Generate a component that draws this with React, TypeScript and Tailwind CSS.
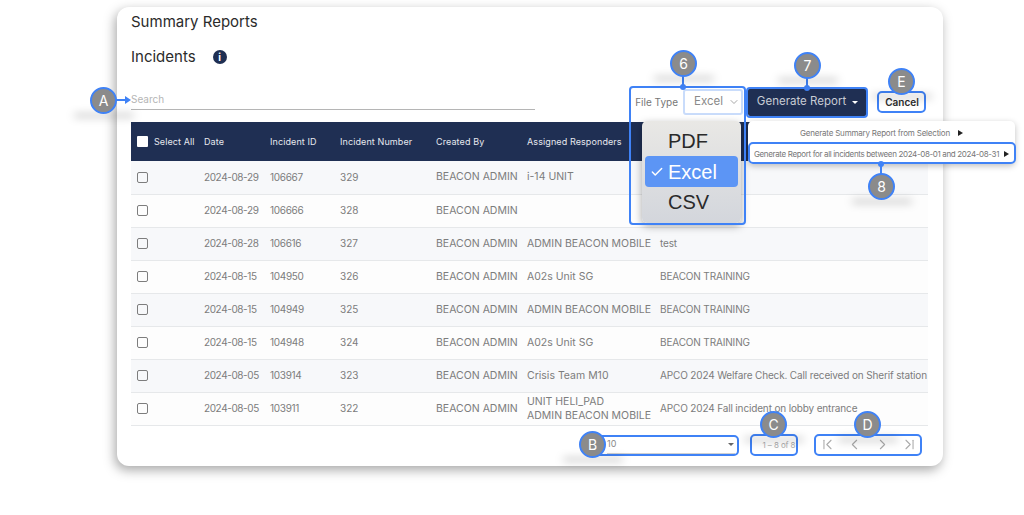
import React from 'react';
import { ChevronDown, ChevronLeft, ChevronRight, Check, ChevronFirst, ChevronLast } from 'lucide-react';

const rows = [
  { date: '2024-08-29', id: '106667', num: '329', by: 'BEACON ADMIN', who: ['i-14 UNIT'], desc: '' },
  { date: '2024-08-29', id: '106666', num: '328', by: 'BEACON ADMIN', who: [], desc: '' },
  { date: '2024-08-28', id: '106616', num: '327', by: 'BEACON ADMIN', who: ['ADMIN BEACON MOBILE'], desc: 'test' },
  { date: '2024-08-15', id: '104950', num: '326', by: 'BEACON ADMIN', who: ['A02s Unit SG'], desc: 'BEACON TRAINING' },
  { date: '2024-08-15', id: '104949', num: '325', by: 'BEACON ADMIN', who: ['ADMIN BEACON MOBILE'], desc: 'BEACON TRAINING' },
  { date: '2024-08-15', id: '104948', num: '324', by: 'BEACON ADMIN', who: ['A02s Unit SG'], desc: 'BEACON TRAINING' },
  { date: '2024-08-05', id: '103914', num: '323', by: 'BEACON ADMIN', who: ['Crisis Team M10'], desc: 'APCO 2024 Welfare Check. Call received on Sherif station' },
  { date: '2024-08-05', id: '103911', num: '322', by: 'BEACON ADMIN', who: ['UNIT HELI_PAD', 'ADMIN BEACON MOBILE'], desc: 'APCO 2024 Fall incident on lobby entrance' },
];

function Bubble({ label, className }: { label: string; className: string }) {
  return (
    <div className={'absolute z-30 ' + className}>
      <div className="absolute left-[-16px] top-[27px] h-[3px] w-[60px] rounded-full bg-black/30 blur-[4px]" />
      <div className="relative flex h-[27px] w-[27px] items-center justify-center rounded-full border-[2px] border-[#3f82f6] bg-[#8b8b8b] text-[14px] text-white">
        {label}
      </div>
    </div>
  );
}

export default function App() {
  return (
    <div className="relative h-[515px] w-[1024px] overflow-hidden bg-white font-['Inter',sans-serif]">
      {/* Card */}
      <div className="ml-[117px] mt-[7px] flex h-[459px] w-[826px] flex-col rounded-xl bg-white pl-[14px] pr-[15px] shadow-[-2px_4px_12px_rgba(0,0,0,0.35)]">
        <h1 className="mt-[6px] text-[15px] leading-[18px] text-[#2b2b2b]">Summary Reports</h1>
        <div className="mt-[17px] flex items-center gap-[17px]">
          <h2 className="text-[15px] leading-[18px] text-[#2b2b2b]">Incidents</h2>
          <div className="flex h-[14px] w-[14px] items-center justify-center rounded-full bg-[#1f2f53] text-[10px] font-bold leading-none text-white">i</div>
        </div>

        <div className="mt-[22px] flex items-start justify-between">
          <div className="flex h-[22px] w-[404px] items-end border-b border-[#b5b5b5] pb-[3px] text-[10px] leading-[14px] text-[#b5b5b5]">Search</div>
          <div className="mr-[3px] flex items-center">
            <span className="text-[10px] text-[#777777]">File Type</span>
            <div className="ml-[5px] flex h-[26px] w-[60px] items-center justify-between rounded-[3px] border-2 border-[#c9dcfb] bg-white pl-[9px] pr-[1px] text-[11.5px] text-[#8a8a8a]">
              Excel
              <ChevronDown size={12} strokeWidth={1.5} />
            </div>
            <button className="ml-[5px] flex h-[28px] w-[119px] items-center justify-center gap-[6px] rounded-[2px] bg-[#1f2f53] text-[11.5px] text-[#c8ccd4]">
              Generate Report
              <span className="h-0 w-0 border-x-[3px] border-t-[3px] border-x-transparent border-t-white" />
            </button>
            <button className="ml-[12px] w-[46px] text-center text-[10px] font-semibold text-[#2b2b2b]">Cancel</button>
          </div>
        </div>

        <table className="mt-[6px] w-[797px] table-fixed border-collapse text-[10.5px] text-[#7c7c7c]">
          <colgroup>
            <col className="w-[73px]" />
            <col className="w-[66px]" />
            <col className="w-[70px]" />
            <col className="w-[96px]" />
            <col className="w-[91px]" />
            <col className="w-[133px]" />
            <col />
          </colgroup>
          <thead>
            <tr className="h-[39px] bg-[#1f2f53] text-left text-[9px] font-normal tracking-[0.1px] text-[#e6e8ee]">
              <th className="pl-[6px] font-normal">
                <div className="flex items-center gap-[6px] whitespace-nowrap">
                  <span className="h-[11px] w-[11px] rounded-[1px] bg-white" />
                  Select All
                </div>
              </th>
              <th className="font-normal">Date</th>
              <th className="font-normal">Incident ID</th>
              <th className="font-normal">Incident Number</th>
              <th className="font-normal">Created By</th>
              <th className="font-normal">Assigned Responders</th>
              <th />
            </tr>
          </thead>
          <tbody>
            {rows.map((r, i) => (
              <tr key={r.id} className={'h-[33px] border-b border-[#e6e8ea] ' + (i % 2 === 0 ? 'bg-[#f7f8fa]' : 'bg-[#fdfdfd]')}>
                <td className="pl-[6px]">
                  <span className="block h-[11px] w-[11px] rounded-[2px] border-[1.5px] border-[#7d7d7d]" />
                </td>
                <td className="text-[10px] tracking-[-0.4px]">{r.date}</td>
                <td className="text-[10px] tracking-[-0.3px]">{r.id}</td>
                <td className="text-[10px]">{r.num}</td>
                <td className="whitespace-nowrap">{r.by}</td>
                <td className="whitespace-nowrap leading-[14px]">
                  {r.who.map((w) => (
                    <div key={w}>{w}</div>
                  ))}
                </td>
                <td className="whitespace-nowrap text-[10px] tracking-[-0.15px]">{r.desc}</td>
              </tr>
            ))}
          </tbody>
        </table>

        {/* Pagination */}
        <div className="mt-[10px] flex items-start text-[#aaaaaa]">
          <div className="ml-[476px] flex h-[18px] w-[128px] items-center justify-between border-b border-[#d0d0d0] text-[9px] text-[#8a8a8a]">
            10
            <span className="mr-[1px] h-0 w-0 border-x-[3.5px] border-t-[3.5px] border-x-transparent border-t-[#666666]" />
          </div>
          <div className="ml-[24px] w-[40px] pt-[3px] text-center text-[8px] tracking-[-0.1px]">1 – 8 of 8</div>
          <div className="ml-[20px] flex w-[99px] items-center justify-between">
            <ChevronFirst size={17} strokeWidth={1.5} />
            <ChevronLeft size={17} strokeWidth={1.5} />
            <ChevronRight size={17} strokeWidth={1.5} />
            <ChevronLast size={17} strokeWidth={1.5} />
          </div>
        </div>
      </div>

      {/* Native select list */}
      <div className="absolute left-[642px] top-[121px] z-10 flex h-[102px] w-[99px] flex-col rounded-[5px] bg-gradient-to-b from-[#e9e8e5] to-[#d3d6dc] px-[3px] pt-[5px] font-['Liberation_Sans',sans-serif] text-[20px] leading-[30px] text-[#2a2a2a] shadow-[0_3px_8px_rgba(0,0,0,0.35)]">
        <div className="pl-[23px]">PDF</div>
        <div className="flex h-[31px] items-center gap-[4px] rounded-[4px] bg-[#5c95f5] pl-[5px] text-white">
          <Check size={14} strokeWidth={2.5} />
          Excel
        </div>
        <div className="pl-[23px]">CSV</div>
      </div>

      {/* Generate menu */}
      <div className="absolute left-[748px] top-[121px] z-10 flex h-[43px] w-[267px] flex-col items-center rounded-[5px] bg-white pt-[2px] text-[#777777] shadow-[0_2px_6px_rgba(0,0,0,0.25)]">
        <div className="flex h-[20px] items-center gap-[8px] text-[8px] tracking-[-0.2px]">
          Generate Summary Report from Selection
          <span className="h-0 w-0 border-y-[3.5px] border-l-[5px] border-y-transparent border-l-[#222222]" />
        </div>
        <div className="flex h-[21px] items-center gap-[5px] whitespace-nowrap text-[8px] tracking-[-0.35px]">
          Generate Report for all incidents between 2024-08-01 and 2024-08-31
          <span className="h-0 w-0 border-y-[3.5px] border-l-[5px] border-y-transparent border-l-[#222222]" />
        </div>
      </div>

      {/* Callout outlines */}
      <div className="absolute left-[629px] top-[86px] z-20 h-[139px] w-[117px] rounded-[4px] border-2 border-[#3f82f6]" />
      <div className="absolute left-[746px] top-[87px] z-20 h-[31px] w-[122px] rounded-[4px] border-2 border-[#3f82f6]" />
      <div className="absolute left-[877px] top-[91px] z-20 h-[22px] w-[49px] rounded-[5px] border-2 border-[#3f82f6]" />
      <div className="absolute left-[748px] top-[142px] z-20 h-[22px] w-[268px] rounded-[5px] border-2 border-[#3f82f6]" />
      <div className="absolute left-[590px] top-[435px] z-20 h-[21px] w-[149px] rounded-[5px] border-2 border-[#3f82f6]" />
      <div className="absolute left-[750px] top-[434px] z-20 h-[22px] w-[48px] rounded-[5px] border-2 border-[#3f82f6]" />
      <div className="absolute left-[814px] top-[434px] z-20 h-[22px] w-[108px] rounded-[5px] border-2 border-[#3f82f6]" />

      {/* Connector dots */}
      <div className="absolute left-[680px] top-[84px] z-20 h-[6px] w-[6px] rounded-full bg-[#3f82f6]" />
      <div className="absolute left-[804px] top-[85px] z-20 h-[6px] w-[6px] rounded-full bg-[#3f82f6]" />
      <div className="absolute left-[878px] top-[161px] z-20 h-[6px] w-[6px] rounded-full bg-[#3f82f6]" />
      <div className="absolute left-[682px] top-[76px] z-20 h-[10px] w-[2px] bg-[#3f82f6]" />
      <div className="absolute left-[806px] top-[76px] z-20 h-[10px] w-[2px] bg-[#3f82f6]" />
      <div className="absolute left-[880px] top-[165px] z-20 h-[10px] w-[2px] bg-[#3f82f6]" />

      {/* Arrow from A to the search field */}
      <div className="absolute left-[116px] top-[99px] z-20 h-[2px] w-[10px] bg-[#3f82f6]" />
      <div className="absolute left-[125px] top-[96px] z-20 h-0 w-0 border-y-[4px] border-l-[6px] border-y-transparent border-l-[#3f82f6]" />

      <Bubble label="A" className="left-[90px] top-[87px]" />
      <Bubble label="6" className="left-[670px] top-[50px]" />
      <Bubble label="7" className="left-[794px] top-[52px]" />
      <Bubble label="E" className="left-[888px] top-[68px]" />
      <Bubble label="8" className="left-[868px] top-[173px]" />
      <Bubble label="B" className="left-[579px] top-[431px]" />
      <Bubble label="C" className="left-[760px] top-[411px]" />
      <Bubble label="D" className="left-[854px] top-[411px]" />
    </div>
  );
}
